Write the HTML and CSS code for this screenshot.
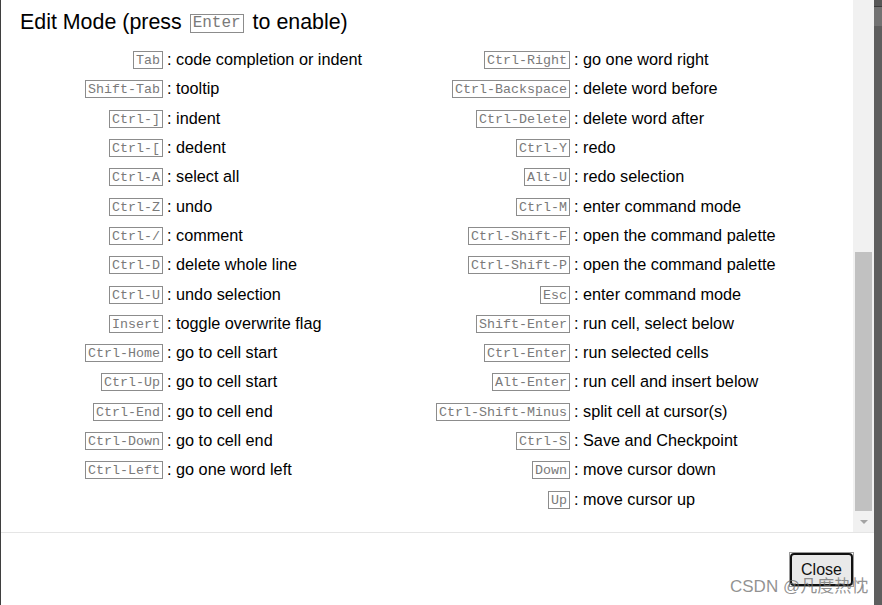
FILE: index.html
```html
<!DOCTYPE html>
<html>
<head>
<meta charset="utf-8">
<title>Keyboard shortcuts</title>
<link rel="stylesheet" href="styles.css">
</head>
<body>
<div class="page">
  <div class="edge-left"></div>
  <div class="modal">
    <div class="modal-main">
      <div class="modal-body">
        <h4 class="title">Edit Mode (press <kbd>Enter</kbd> to enable)</h4>
        <div class="cols">
          <div class="col">
            <div class="row"><span class="key"><kbd>Tab</kbd></span><span class="desc">: code completion or indent</span></div>
            <div class="row"><span class="key"><kbd>Shift-Tab</kbd></span><span class="desc">: tooltip</span></div>
            <div class="row"><span class="key"><kbd>Ctrl-]</kbd></span><span class="desc">: indent</span></div>
            <div class="row"><span class="key"><kbd>Ctrl-[</kbd></span><span class="desc">: dedent</span></div>
            <div class="row"><span class="key"><kbd>Ctrl-A</kbd></span><span class="desc">: select all</span></div>
            <div class="row"><span class="key"><kbd>Ctrl-Z</kbd></span><span class="desc">: undo</span></div>
            <div class="row"><span class="key"><kbd>Ctrl-/</kbd></span><span class="desc">: comment</span></div>
            <div class="row"><span class="key"><kbd>Ctrl-D</kbd></span><span class="desc">: delete whole line</span></div>
            <div class="row"><span class="key"><kbd>Ctrl-U</kbd></span><span class="desc">: undo selection</span></div>
            <div class="row"><span class="key"><kbd>Insert</kbd></span><span class="desc">: toggle overwrite flag</span></div>
            <div class="row"><span class="key"><kbd>Ctrl-Home</kbd></span><span class="desc">: go to cell start</span></div>
            <div class="row"><span class="key"><kbd>Ctrl-Up</kbd></span><span class="desc">: go to cell start</span></div>
            <div class="row"><span class="key"><kbd>Ctrl-End</kbd></span><span class="desc">: go to cell end</span></div>
            <div class="row"><span class="key"><kbd>Ctrl-Down</kbd></span><span class="desc">: go to cell end</span></div>
            <div class="row"><span class="key"><kbd>Ctrl-Left</kbd></span><span class="desc">: go one word left</span></div>
          </div>
          <div class="col">
            <div class="row"><span class="key"><kbd>Ctrl-Right</kbd></span><span class="desc">: go one word right</span></div>
            <div class="row"><span class="key"><kbd>Ctrl-Backspace</kbd></span><span class="desc">: delete word before</span></div>
            <div class="row"><span class="key"><kbd>Ctrl-Delete</kbd></span><span class="desc">: delete word after</span></div>
            <div class="row"><span class="key"><kbd>Ctrl-Y</kbd></span><span class="desc">: redo</span></div>
            <div class="row"><span class="key"><kbd>Alt-U</kbd></span><span class="desc">: redo selection</span></div>
            <div class="row"><span class="key"><kbd>Ctrl-M</kbd></span><span class="desc">: enter command mode</span></div>
            <div class="row"><span class="key"><kbd>Ctrl-Shift-F</kbd></span><span class="desc">: open the command palette</span></div>
            <div class="row"><span class="key"><kbd>Ctrl-Shift-P</kbd></span><span class="desc">: open the command palette</span></div>
            <div class="row"><span class="key"><kbd>Esc</kbd></span><span class="desc">: enter command mode</span></div>
            <div class="row"><span class="key"><kbd>Shift-Enter</kbd></span><span class="desc">: run cell, select below</span></div>
            <div class="row"><span class="key"><kbd>Ctrl-Enter</kbd></span><span class="desc">: run selected cells</span></div>
            <div class="row"><span class="key"><kbd>Alt-Enter</kbd></span><span class="desc">: run cell and insert below</span></div>
            <div class="row"><span class="key"><kbd>Ctrl-Shift-Minus</kbd></span><span class="desc">: split cell at cursor(s)</span></div>
            <div class="row"><span class="key"><kbd>Ctrl-S</kbd></span><span class="desc">: Save and Checkpoint</span></div>
            <div class="row"><span class="key"><kbd>Down</kbd></span><span class="desc">: move cursor down</span></div>
            <div class="row"><span class="key"><kbd>Up</kbd></span><span class="desc">: move cursor up</span></div>
          </div>
        </div>
      </div>
      <div class="scrollbar">
        <div class="thumb"></div>
        <div class="arrow-zone"><span class="arrow"></span></div>
      </div>
    </div>
    <div class="modal-footer">
      <span class="btn-ring"><button class="btn" type="button">Close</button></span>
    </div>
  </div>
  <div class="edge-right">
    <div class="er-a"></div>
    <div class="er-line"></div>
    <div class="er-b"></div>
    <div class="er-c"></div>
  </div>
  <div class="watermark">CSDN @凡度热忱</div>
</div>
</body>
</html>
```

FILE: styles.css
```css
html, body {
  margin: 0;
  padding: 0;
}

body {
  font-family: "Liberation Sans", Arial, sans-serif;
  color: #000;
  background: #5e5e5e;
}

.page {
  position: relative;
  display: flex;
  width: 882px;
  height: 605px;
  overflow: hidden;
}

.edge-left {
  width: 1px;
  flex: none;
  background: #3f3f3f;
}

.modal {
  width: 873px;
  flex: none;
  background: #fff;
  display: flex;
  flex-direction: column;
}

.modal-main {
  display: flex;
  height: 532px;
  flex: none;
}

.modal-body {
  flex: 1;
  padding-left: 19px;
}

.title {
  margin: 0;
  height: 45px;
  line-height: 44px;
  font-size: 21.4px;
  font-weight: normal;
}

.title kbd {
  font-size: 16px;
  line-height: 17px;
  padding: 0 2px;
  margin: 0 3px 0 2px;
  vertical-align: 2px;
}

.cols {
  display: grid;
  grid-template-columns: 407px 407px;
}

.row {
  display: flex;
  align-items: center;
  height: 29.3px;
}

.key {
  flex: none;
  width: 147px;
  text-align: right;
}

kbd {
  display: inline-block;
  font-family: "Liberation Mono", "Courier New", monospace;
  font-size: 13.33px;
  line-height: 15px;
  padding: 1px 2px 0;
  border: 1px solid #8c8c8c;
  color: #7a7a7a;
  background: #fff;
  margin-right: 4px;
}

.desc {
  font-size: 16.25px;
  white-space: pre;
}

.scrollbar {
  width: 21px;
  flex: none;
  background: #f1f1f1;
  display: flex;
  flex-direction: column;
  align-items: center;
}

.thumb {
  width: 17px;
  height: 259px;
  margin-top: 252px;
  background: #c1c1c1;
}

.arrow-zone {
  flex: 1;
  display: flex;
  align-items: center;
  justify-content: center;
}

.arrow {
  width: 0;
  height: 0;
  border-left: 4px solid transparent;
  border-right: 4px solid transparent;
  border-top: 4px solid #a3a3a3;
}

.modal-footer {
  flex: 1;
  border-top: 1px solid #e5e5e5;
  display: flex;
  justify-content: flex-end;
  align-items: flex-start;
  padding: 19px 20px 0 0;
}

.btn-ring {
  display: inline-block;
  border: 1px solid #9a9a9a;
}

.btn {
  display: block;
  width: 63px;
  height: 33px;
  padding: 0;
  border: 2px solid #111;
  border-radius: 4px;
  background: #e9e9e9;
  color: #111;
  font-family: "Liberation Sans", Arial, sans-serif;
  font-size: 16px;
}

.edge-right {
  width: 8px;
  flex: none;
  display: flex;
  flex-direction: column;
}

.er-a {
  height: 6px;
  background: #575757;
}

.er-line {
  height: 1px;
  background: #3b3b3b;
}

.er-b {
  height: 19px;
  background: #727272;
}

.er-c {
  flex: 1;
  background: #5e5e5e;
}

.watermark {
  position: absolute;
  left: 730px;
  top: 577px;
  font-family: "Liberation Sans", "Noto Sans CJK SC", sans-serif;
  font-size: 17px;
  line-height: 20px;
  color: rgba(110, 110, 110, 0.75);
  white-space: nowrap;
}
```
